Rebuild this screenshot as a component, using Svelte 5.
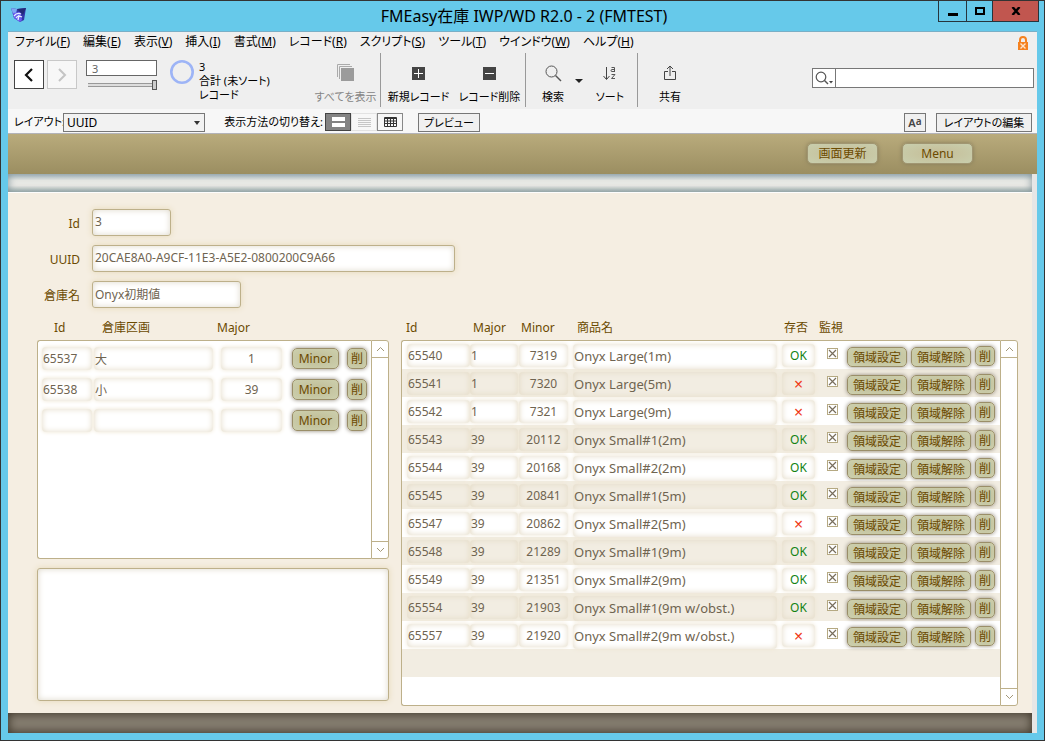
<script>
  const menus = [
    ['ファイル', 'F'], ['編集', 'E'], ['表示', 'V'], ['挿入', 'I'], ['書式', 'M'],
    ['レコード', 'R'], ['スクリプト', 'S'], ['ツール', 'T'], ['ウインドウ', 'W'], ['ヘルプ', 'H']
  ];
  const areas = [
    { id: '65537', name: '大', major: '1' },
    { id: '65538', name: '小', major: '39' },
    { id: '', name: '', major: '' }
  ];
  const items = [
    ['65540', '1', '7319', 'Onyx Large(1m)', true],
    ['65541', '1', '7320', 'Onyx Large(5m)', false],
    ['65542', '1', '7321', 'Onyx Large(9m)', false],
    ['65543', '39', '20112', 'Onyx Small#1(2m)', true],
    ['65544', '39', '20168', 'Onyx Small#2(2m)', true],
    ['65545', '39', '20841', 'Onyx Small#1(5m)', true],
    ['65547', '39', '20862', 'Onyx Small#2(5m)', false],
    ['65548', '39', '21289', 'Onyx Small#1(9m)', true],
    ['65549', '39', '21351', 'Onyx Small#2(9m)', true],
    ['65554', '39', '21903', 'Onyx Small#1(9m w/obst.)', true],
    ['65557', '39', '21920', 'Onyx Small#2(9m w/obst.)', false]
  ];
</script>

{#snippet scrollbar()}
  <div class="scroll">
    <button aria-label="上へ"><svg width="9" height="6" viewBox="0 0 9 6"><path d="M1 5 4.500 1.500 8 5" fill="none" stroke="#a39878" /></svg></button>
    <span></span>
    <button aria-label="下へ"><svg width="9" height="6" viewBox="0 0 9 6"><path d="M1 1 4.500 4.500 8 1" fill="none" stroke="#a39878" /></svg></button>
  </div>
{/snippet}

<div class="window">
  <header class="title">
    <svg class="logo" width="16" height="16" viewBox="0 0 16 16">
      <path d="M0 1 6 2 15 1 13 13 9 15 3 11Z" fill="#3337a8" />
      <path d="M0 1 6 2 5 7 2 7Z" fill="#7fa8f5" />
      <path d="M6 2 15 1 12 8Z" fill="#232a78" />
      <path d="M2 6 9 5 11 13 9 15 3 11Z" fill="#6a5cf0" />
      <path d="M3 9Q6 5 10 7M5 11Q7 8 11 10M8 8 7 13" fill="none" stroke="#e4f0ff" stroke-width="1.300" />
    </svg>
    <h1>FMEasy在庫 IWP/WD R2.0 - 2 (FMTEST)</h1>
    <div class="controls">
      <button class="min" aria-label="最小化"><svg width="10" height="10" viewBox="0 0 10 10"><path d="M0 7H10V10H0Z" /></svg></button>
      <button class="max" aria-label="最大化"><svg width="10" height="8" viewBox="0 0 10 8"><path d="M1 1H9V7H1Z" fill="none" stroke="#000" stroke-width="2" /></svg></button>
      <button class="close" aria-label="閉じる"><svg width="10" height="8" viewBox="0 0 10 8"><path d="M1.500 0 8.500 8M8.500 0 1.500 8" stroke="#000" stroke-width="2.400" /></svg></button>
    </div>
  </header>

  <div class="client">
    <nav class="menu">
      {#each menus as [name, key]}
        <button>{name}(<u>{key}</u>)</button>
      {/each}
      <svg class="lock" width="10" height="14" viewBox="0 0 10 14">
        <path d="M2 7V4Q2 1 5 1Q8 1 8 4V7" fill="none" stroke="#f58220" stroke-width="2" />
        <path d="M0 6H10V14H0Z" fill="#f58220" />
        <path d="M2.500 7.500 7.500 12.500M7.500 7.500 2.500 12.500" stroke="#fde5cd" stroke-width="1.400" />
      </svg>
    </nav>

    <div class="toolbar">
      <button class="nav" aria-label="前のレコード"><svg width="10" height="14" viewBox="0 0 10 14"><path d="M8 1 2 7 8 13" fill="none" stroke="#111" stroke-width="2.200" /></svg></button>
      <button class="nav off" aria-label="次のレコード" disabled><svg width="10" height="14" viewBox="0 0 10 14"><path d="M2 1 8 7 2 13" fill="none" stroke="#c4c4c4" stroke-width="2" /></svg></button>
      <div class="record">
        <input class="number" aria-label="レコード番号" value="3" />
        <input class="slider" type="range" aria-label="レコード位置" min="1" max="3" value="3" />
      </div>
      <svg class="ring" width="24" height="26" viewBox="0 0 24 26"><circle cx="12" cy="13" r="10.700" fill="none" stroke="#9db4f6" stroke-width="2.600" /></svg>
      <p class="count">3<br />合計 (未ソート)<br />レコード</p>
      <button class="tool all" disabled>
        <svg width="17" height="18" viewBox="0 0 17 18"><path d="M.5 13V.5H13M2.500 15V2.500H15" fill="none" stroke="#aaa" /><path d="M4 4H17V17H4Z" fill="#9b9b9b" /></svg>
        すべてを表示
      </button>
      <i class="sep"></i>
      <button class="tool wide">
        <svg width="13" height="18" viewBox="0 0 13 18"><path d="M0 3H13V16H0Z" fill="#444" /><path d="M2 9.500H11M6.500 5V14" stroke="#fff" /></svg>
        新規レコード
      </button>
      <button class="tool wide">
        <svg width="13" height="18" viewBox="0 0 13 18"><path d="M0 3H13V16H0Z" fill="#444" /><path d="M2 9.500H11" stroke="#fff" /></svg>
        レコード削除
      </button>
      <i class="sep"></i>
      <button class="tool find">
        <svg width="17" height="18" viewBox="0 0 17 18"><circle cx="6.500" cy="7.500" r="5.500" fill="none" stroke="#555" /><path d="M10.500 11.500 16 17" stroke="#555" stroke-width="1.400" /></svg>
        検索
      </button>
      <svg class="drop" width="8" height="4" viewBox="0 0 8 4"><path d="M0 0H8L4 4Z" fill="#222" /></svg>
      <button class="tool sort">
        <svg width="14" height="18" viewBox="0 0 14 18"><path d="M3.500 3V15M.5 12 3.500 15.500 6.500 12" fill="none" stroke="#444" /><path d="M8.500 3.500H11.500V8M11.500 5.500H9Q8 5.500 8 6.700Q8 7.500 9 7.500H11.500M8.500 10.500H12L8.500 14.500H12" fill="none" stroke="#555" /></svg>
        ソート
      </button>
      <i class="sep"></i>
      <button class="tool share">
        <svg width="12" height="18" viewBox="0 0 12 18"><path d="M4 7.500H.5V15.500H11.500V7.500H8M6 12V2M3 5 6 2 9 5" fill="none" stroke="#444" /></svg>
        共有
      </button>
      <div class="search">
        <button aria-label="検索オプション"><svg width="18" height="14" viewBox="0 0 18 14"><circle cx="6" cy="6" r="4.800" fill="none" stroke="#555" stroke-width="1.200" /><path d="M9.500 9.500 13 13" stroke="#555" stroke-width="1.400" /><path d="M14 10H18L16 12.500Z" fill="#444" /></svg></button>
        <input type="search" aria-label="クイック検索" />
      </div>
    </div>

    <div class="layoutbar">
      <label for="layout">レイアウト:</label>
      <div class="select">
        <select id="layout"><option>UUID</option></select>
      </div>
      <span class="switch">表示方法の切り替え:</span>
      <div class="views">
        <button class="on" aria-label="フォーム形式"><svg width="13" height="10" viewBox="0 0 13 10"><path d="M0 0H13V4H0ZM0 6H13V10H0Z" fill="#fff" /></svg></button>
        <button class="dim" aria-label="リスト形式"><svg width="13" height="9" viewBox="0 0 13 9"><path d="M0 .5H13M0 2.500H13M0 4.500H13M0 6.500H13M0 8.500H13" stroke="#c6c6c6" /></svg></button>
        <button aria-label="表形式"><svg width="13" height="10" viewBox="0 0 13 10"><path d="M.5 .5H12.500V9.500H.5ZM.5 1.500H12.500M.5 4H12.500M.5 6.500H12.500M3.500 1V9M6.500 1V9M9.500 1V9" fill="none" stroke="#333" /></svg></button>
      </div>
      <button class="plain preview">プレビュー</button>
      <button class="plain format">A<sup>a</sup></button>
      <button class="plain edit">レイアウトの編集</button>
    </div>

    <div class="banner">
      <button class="glow">画面更新</button>
      <button class="glow">Menu</button>
    </div>

    <div class="page">
      <div class="glass"></div>
      <main>
        <form class="fields">
          <label for="fid">Id</label><input id="fid" class="w-id" value="3" />
          <label for="fuuid">UUID</label><input id="fuuid" class="w-uuid" value="20CAE8A0-A9CF-11E3-A5E2-0800200C9A66" />
          <label for="fname">倉庫名</label><input id="fname" class="w-name" value="Onyx初期値" />
        </form>
        <div class="columns">
          <div class="left">
            <div class="portal areas">
              <table>
                <thead><tr><th>Id</th><th>倉庫区画</th><th>Major</th></tr></thead>
                <tbody>
                  {#each areas as area}
                    <tr>
                      <td><input aria-label="Id" value={area.id} /></td>
                      <td><input aria-label="倉庫区画" value={area.name} /></td>
                      <td><input class="mid" aria-label="Major" value={area.major} /></td>
                      <td><button class="small">Minor</button></td>
                      <td><button class="small">削</button></td>
                    </tr>
                  {/each}
                </tbody>
              </table>
              {@render scrollbar()}
            </div>
            <textarea aria-label="メモ"></textarea>
          </div>
          <div class="portal items">
            <table>
              <thead><tr><th>Id</th><th>Major</th><th>Minor</th><th>商品名</th><th>存否</th><th>監視</th></tr></thead>
              <tbody>
                {#each items as [id, major, minor, name, ok]}
                  <tr>
                    <td><input aria-label="Id" value={id} /></td>
                    <td><input aria-label="Major" value={major} /></td>
                    <td><input class="mid" aria-label="Minor" value={minor} /></td>
                    <td><input class="product" aria-label="商品名" value={name} /></td>
                    <td><input class="mid" class:yes={ok} class:no={!ok} aria-label="存否" value={ok ? 'OK' : '×'} /></td>
                    <td><input type="checkbox" aria-label="監視" checked /></td>
                    <td><button class="small">領域設定</button></td>
                    <td><button class="small">領域解除</button></td>
                    <td><button class="small">削</button></td>
                  </tr>
                {/each}
                <tr></tr>
                <tr></tr>
              </tbody>
            </table>
            {@render scrollbar()}
          </div>
        </div>
      </main>
      <footer></footer>
    </div>
  </div>
</div>

<style>
  :global(body) { margin: 0; }
  .window, .window * { box-sizing: border-box; }
  .window {
    display: flex;
    flex-direction: column;
    min-height: 100vh;
    border: 1px solid #333;
    padding: 0 7px 7px;
    background: #66c9ea;
    font: 12px/16px "Noto Sans", "Noto Sans CJK JP", sans-serif;
    color: #000;
  }
  button, input, select, textarea { font: inherit; color: inherit; margin: 0; }
  button { padding: 0; border: 0; background: none; white-space: nowrap; }
  svg { display: block; }

  .title { display: flex; align-items: flex-start; height: 30px; }
  .logo { margin: 6px 0 0 3px; }
  h1 { flex: 1; margin: 4px 0 0 83px; font-size: 16px; line-height: 22px; font-weight: 400; text-align: center; }
  .controls { display: flex; margin-right: -2px; height: 21px; }
  .controls button { display: grid; place-items: center; border: 1px solid #26343c; border-top: 0; border-right: 0; }
  .min { width: 28px; }
  .max { width: 26px; }
  .controls .close { width: 47px; background: #c1564f; border-right: 1px solid #26343c; }

  .client { flex: 1; display: flex; flex-direction: column; background: #efefef; }
  .menu, .toolbar, .layoutbar { font-feature-settings: "palt"; }
  .menu { display: flex; align-items: center; gap: 13px; height: 20px; padding: 0 9px 0 7px; border-top: 1px solid #79afc6; }
  .lock { margin: 2px 0 0 auto; }

  .toolbar { display: flex; align-items: flex-start; height: 58px; padding: 2px 3px 0 6px; font-size: 11px; }
  .nav { display: grid; place-items: center; width: 30px; height: 29px; margin: 7px 3px 0 0; border: 1px solid #444; background: #fff; }
  .nav.off { border-color: #c8c8c8; background: #f7f7f7; }
  .record { display: flex; flex-direction: column; width: 71px; margin: 7px 13px 0 6px; gap: 4px; }
  .number { width: 100%; height: 16px; padding: 0 5px; border: 1px solid #666; background: #fff; color: #666; line-height: 14px; }
  .slider { appearance: none; width: 69px; height: 10px; margin-left: 2px; background: linear-gradient(#999, #999) 0 3px / 100% 1px no-repeat, linear-gradient(#999, #999) 0 6px / 100% 1px no-repeat, linear-gradient(#ddd, #ddd) 0 4px / 100% 2px no-repeat; }
  .slider::-webkit-slider-thumb { appearance: none; width: 5px; height: 10px; background: #ccc; border: 1px solid #555; }
  .ring { margin-top: 6px; }
  .count { width: 112px; margin: 7px 0 0 5px; line-height: 14px; }
  .tool { display: flex; flex-direction: column; align-items: center; gap: 7px; margin-top: 11px; line-height: 16px; }
  .all { width: 69px; color: #858585; }
  .wide { width: 71px; }
  .find { width: 50px; }
  .sort { width: 54px; }
  .share { width: 60px; }
  .drop { margin: 26px 0 0 -3px; }
  .sep { width: 1px; height: 54px; margin-right: 2px; background: #999; }
  .search { display: flex; width: 222px; height: 20px; margin: 15px 0 0 auto; border: 1px solid #777; background: #fff; }
  .search button { width: 23px; padding-left: 2px; border-right: 1px solid #777; }
  .search input { flex: 1; min-width: 0; border: 0; padding: 0 4px; background: none; }

  .layoutbar { display: flex; align-items: flex-start; height: 25px; padding: 4px 5px 0 6px; background: #f7f7f7; border-bottom: 1px solid #b3b3b8; font-size: 11px; line-height: 18px; }
  .layoutbar label { width: 49px; white-space: nowrap; }
  .select { position: relative; width: 142px; }
  .select::after { content: ""; position: absolute; right: 5px; top: 8px; border: 3px solid transparent; border-top: 4px solid #333; border-bottom: 0; }
  select { appearance: none; width: 100%; height: 19px; padding: 0 3px; border: 1px solid #777; border-radius: 0; background: #f2f2f2; font-size: 12px; line-height: 17px; }
  .switch { width: 106px; margin-left: 14px; text-align: right; padding-right: 2px; white-space: nowrap; }
  .views { display: flex; margin: 0 15px 0 0; }
  .views button { display: grid; place-items: center; width: 26px; height: 18px; border: 1px solid #888; }
  .views .on { background: #838383; border-color: #444; }
  .views .dim { border-color: #e2e2e2; }
  .plain { height: 19px; border: 1px solid #777; background: #f0f0f0; line-height: 17px; }
  .preview { width: 62px; }
  .format { width: 22px; margin-left: auto; margin-right: 10px; font-weight: 600; line-height: 12px; color: #444; }
  .format sup { font-size: 10px; line-height: 8px; vertical-align: 2px; }
  .edit { width: 96px; }

  .banner { display: flex; justify-content: flex-end; gap: 24px; height: 40px; padding: 9px 64px 0 0; background: linear-gradient(#b9ab7c, #9b8e61); }
  .glow { width: 71px; height: 21px; border: 1px solid #a09672; border-radius: 5px; background: radial-gradient(ellipse, #c6c09b 20%, #c9cfae 100%); box-shadow: 0 0 4px #857b5a; color: #6b4a00; line-height: 18px; }

  .page { flex: 1; display: flex; flex-direction: column; padding-right: 5px; background: #e6e6e6; }
  .glass { height: 19px; border-bottom: 1px solid #fdfdfd; background: linear-gradient(#b4c3c9, #e9eae6 35%, #ebeae6 65%, #aab9b6); box-shadow: inset 0 0 9px #809399; }
  main { flex: 1; padding: 16px 14px 7px 29px; background: #f5eee2; color: #6b4a00; }
  footer { height: 20px; background: #857d70; box-shadow: inset 0 0 10px 1px #40382c; }

  .fields { display: grid; grid-template-columns: 43px 1fr; column-gap: 12px; row-gap: 9px; }
  .fields label { padding-top: 7px; line-height: 16px; text-align: right; white-space: nowrap; }
  .fields input, textarea { border: 1px solid #bdb08a; border-radius: 3px; background: #fff; box-shadow: 0 0 6px #e6d9b8, inset 0 0 6px #ded8c9; color: #6f6450; }
  .fields input { height: 28px; padding: 0 2px 2px; }
  .fields input, .fields label { height: 27px; }
  .w-id { width: 79px; }
  .w-uuid { width: 363px; }
  .w-name { width: 149px; }

  .columns { display: flex; align-items: flex-start; gap: 12px; margin-top: 12px; }
  .left { width: 352px; display: flex; flex-direction: column; gap: 9px; }
  textarea { display: block; width: 100%; height: 133px; resize: none; padding: 4px; }

  .portal { display: grid; grid-template-columns: 1fr 18px; }
  .items { flex: 1; min-width: 0; }
  table, thead, tbody { display: block; min-width: 0; }
  tr { display: grid; }
  th, td { display: block; padding: 0; min-width: 0; }
  th { font-weight: 400; text-align: left; line-height: 16px; white-space: nowrap; }
  thead tr { height: 20px; }
  tbody { border: 1px solid #bdb08a; border-right: 0; border-radius: 3px 0 0 3px; background: #fff; overflow: hidden; }
  .areas tbody { height: 219px; padding-top: 4px; }
  .items tbody { height: 366px; }
  .areas thead tr { grid-template-columns: 48px 115px 1fr; padding-left: 17px; }
  .areas tbody tr { grid-template-columns: 50px 113px 63px 47px 20px; column-gap: 8px; height: 31px; padding: 2px 0 0 4px; }
  .areas td:nth-child(2) { margin-left: -6px; }
  .areas td:nth-child(3) { margin-right: 2px; }
  .items thead tr { grid-template-columns: 67px 48px 56px 1fr 35px 181px; padding-left: 5px; }
  .items tbody tr { grid-template-columns: 63px 48px 51px 1fr 33px 32px 64px 64px 20px; height: 28px; padding: 3px 5px 0; }
  .items tbody tr:nth-child(even) { background: #f2ede2; }
  .items td:nth-child(3) { padding: 0 1px; }
  .items td:nth-child(4) { padding: 0 5px 0 4px; }
  .items td:nth-child(6) { padding: 4px 0 0 12px; }
  .items td:nth-child(7), .items td:nth-child(8) { padding: 3px 4px 0 0; }
  .items td:nth-child(9) { padding-top: 2px; }
  td input:not([type="checkbox"]) { display: block; width: 100%; height: 23px; padding: 0 1px; border: 0; border-radius: 4px; background: transparent; box-shadow: 0 0 4px #efe6d3, inset 0 0 6px #e3dac6; color: #6f6450; }
  td input.product:not([type="checkbox"]) { height: 25px; padding-bottom: 2px; font-size: 13px; }
  td input.mid { text-align: center; }
  td input.yes:not([type="checkbox"]) { color: #128212; }
  td input.no:not([type="checkbox"]) { color: #f03a17; font-size: 16px; }
  td input[type="checkbox"] { appearance: none; display: block; width: 11px; height: 11px; border: 1px solid #b5a982; background: #fff; }
  td input[type="checkbox"]:checked { background: url("data:image/svg+xml,%3Csvg xmlns='http://www.w3.org/2000/svg' viewBox='0 0 9 9'%3E%3Cpath d='M1 1 8 8M8 1 1 8' stroke='%23776d5c' stroke-width='1.2'/%3E%3C/svg%3E") #fff; }
  .small { display: block; width: 100%; height: 20px; border: 1px solid #9a8e68; border-radius: 5px; background: radial-gradient(ellipse, #c3c29d 30%, #cdd0ae 100%); box-shadow: 0 0 4px #8d8575; color: #6b4a00; line-height: 17px; }
  .areas .small { height: 21px; margin-top: 1px; line-height: 18px; }
  .scroll { display: flex; flex-direction: column; margin-top: 20px; border: 1px solid #bdb08a; border-radius: 0 3px 3px 0; background: #fff; }
  .scroll span { flex: 1; border: solid #bdb08a; border-width: 1px 0; }
  .scroll button { display: grid; place-items: center; height: 16px; }
</style>
